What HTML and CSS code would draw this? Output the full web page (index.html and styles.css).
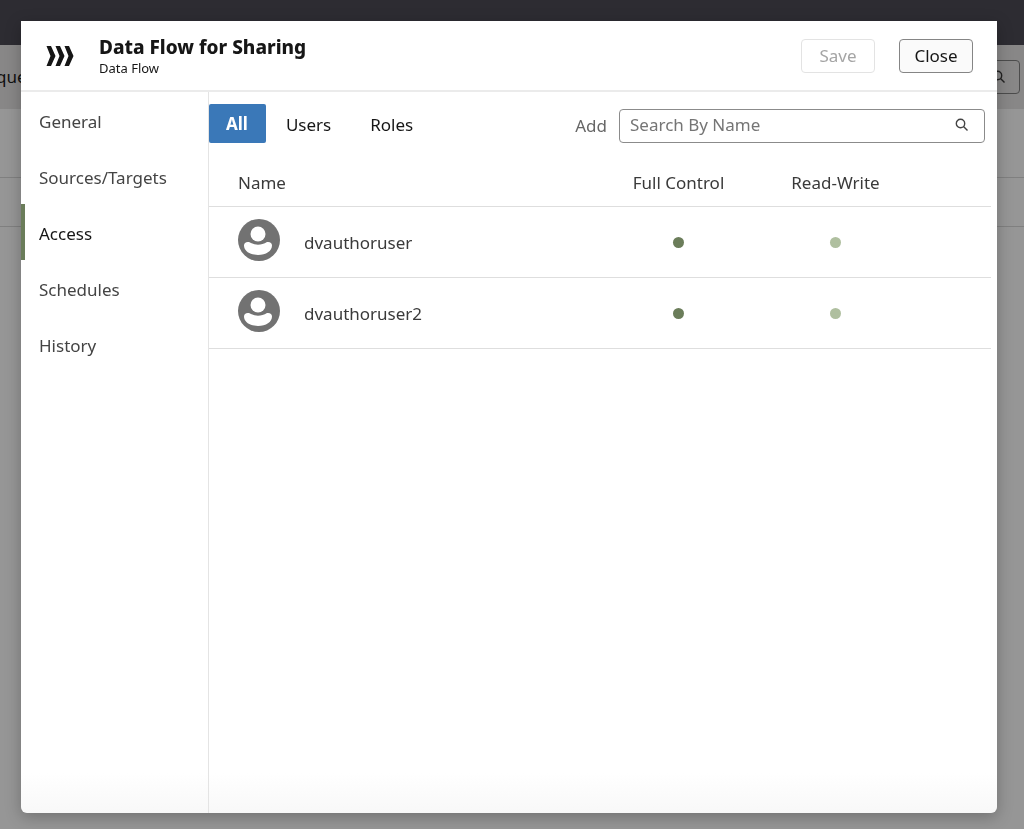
FILE: index.html
```
<!DOCTYPE html>
<html lang="en">

<head>
    <meta charset="UTF-8">
    <meta name="viewport" content="width=device-width, initial-scale=1.0">
    <title>Data Flow for Sharing</title>

    <link rel="stylesheet" href="styles.css">
</head>

<body>
    <!-- dimmed page behind the dialog -->
    <div class="page">
        <div class="page-top"></div>
        <div class="page-bar">
            <span class="page-label">que</span>
            <div class="page-search">
                <svg class="search-icon" viewBox="0 0 14 14">
                    <circle cx="5.5" cy="5.5" r="4.200" />
                    <path d="M8.500 8.500L12.500 12.500" />
                </svg>
            </div>
        </div>
        <div class="page-row page-row-tall"></div>
        <div class="page-row"></div>
    </div>

    <div class="dialog" role="dialog" aria-labelledby="title">
        <header class="dialog-header">
            <svg class="flow-icon" viewBox="0 0 28 20">
                <path d="M0.500 0H5L9.500 10L5 20H0.500L4.500 10Z" />
                <path d="M9.500 0H14L18.500 10L14 20H9.500L13.500 10Z" />
                <path d="M18.500 0H23L27.500 10L23 20H18.500L22.500 10Z" />
            </svg>
            <div class="heading">
                <h1 id="title">Data Flow for Sharing</h1>
                <p>Data Flow</p>
            </div>
            <div class="actions">
                <button class="btn" type="button" disabled>Save</button>
                <button class="btn" type="button">Close</button>
            </div>
        </header>

        <div class="dialog-body">
            <nav class="side">
                <a href="#general">General</a>
                <a href="#sources">Sources/Targets</a>
                <a href="#access" class="active">Access</a>
                <a href="#schedules">Schedules</a>
                <a href="#history">History</a>
            </nav>

            <main class="content">
                <div class="toolbar">
                    <div class="tabs">
                        <button class="tab selected" type="button">All</button>
                        <button class="tab" type="button">Users</button>
                        <button class="tab" type="button">Roles</button>
                    </div>
                    <form class="add" action="#">
                        <label for="search">Add</label>
                        <div class="search-box">
                            <input type="text" id="search" placeholder="Search By Name">
                            <svg class="search-icon" viewBox="0 0 14 14">
                                <circle cx="5.5" cy="5.5" r="4.200" />
                                <path d="M8.500 8.500L12.500 12.500" />
                            </svg>
                        </div>
                    </form>
                </div>

                <table class="access">
                    <thead>
                        <tr>
                            <th class="name">Name</th>
                            <th class="level">Full Control</th>
                            <th class="level">Read-Write</th>
                            <th class="spare"></th>
                        </tr>
                    </thead>
                    <tbody>
                        <tr>
                            <td class="name">
                                <div class="user">
                                    <svg class="avatar" viewBox="0 0 42 42">
                                        <circle class="disc" cx="21" cy="21" r="21" />
                                        <circle cx="20" cy="15" r="7.500" />
                                        <path d="M11 23C8 22.500 6 24 6 26.500C6 32 12 36 20 36S34 32 34 26.500C34 24 32 22.500 29 23C23 26.500 17 26.500 11 23Z" />
                                    </svg>
                                    <span>dvauthoruser</span>
                                </div>
                            </td>
                            <td class="level"><span class="dot"></span></td>
                            <td class="level"><span class="dot pale"></span></td>
                            <td></td>
                        </tr>
                        <tr>
                            <td class="name">
                                <div class="user">
                                    <svg class="avatar" viewBox="0 0 42 42">
                                        <circle class="disc" cx="21" cy="21" r="21" />
                                        <circle cx="20" cy="15" r="7.500" />
                                        <path d="M11 23C8 22.500 6 24 6 26.500C6 32 12 36 20 36S34 32 34 26.500C34 24 32 22.500 29 23C23 26.500 17 26.500 11 23Z" />
                                    </svg>
                                    <span>dvauthoruser2</span>
                                </div>
                            </td>
                            <td class="level"><span class="dot"></span></td>
                            <td class="level"><span class="dot pale"></span></td>
                            <td></td>
                        </tr>
                    </tbody>
                </table>
            </main>
        </div>
    </div>
</body>

</html>
```

FILE: styles.css
```
:root {
    --text: #3a3a3a;
    --line: #dedede;
    --blue: #3a78b8;
    --green: #6b7d5a;
}

* {
    box-sizing: border-box;
}

html,
body {
    margin: 0;
    height: 100%;
}

body {
    overflow: hidden;
    background: #969696;
    color: var(--text);
    font: 17px/24px "Noto Sans", "Open Sans", sans-serif;
}

h1,
p {
    margin: 0;
}

button,
input {
    font: inherit;
}

/* page behind */
.page-top {
    height: 45px;
    background: #2d2c32;
}

.page-bar {
    display: flex;
    align-items: center;
    justify-content: space-between;
    height: 64px;
    padding-right: 4px;
    background: #888787;
}

.page-label {
    margin-left: -4px;
    color: #111;
}

.page-search {
    display: flex;
    align-items: center;
    justify-content: flex-end;
    width: 120px;
    height: 34px;
    padding-right: 13px;
    border: 1px solid #4c4c4c;
    border-radius: 4px;
}

.page-row {
    height: 49px;
    border-bottom: 1px solid #808080;
}

.page-row-tall {
    height: 69px;
}

/* dialog */
.dialog {
    position: fixed;
    inset: 21px 27px 16px 21px;
    display: flex;
    flex-direction: column;
    overflow: hidden;
    border-radius: 0 0 6px 6px;
    background: linear-gradient(to top, #f8f8f8, #fff 40px);
    box-shadow: 0 4px 16px rgba(0, 0, 0, .25);
}

.dialog-header {
    display: flex;
    align-items: center;
    height: 71px;
    padding: 0 24px 0 25px;
    border-bottom: 2px solid #ebebeb;
}

.flow-icon {
    width: 28px;
    height: 20px;
    margin-right: 25px;
    fill: #161616;
}

.heading {
    flex: 1;
    color: #161616;
}

.heading h1 {
    font-size: 19px;
    line-height: 24px;
    font-weight: 800;
}

.heading p {
    font-size: 13px;
    line-height: 18px;
}

.actions {
    display: flex;
    gap: 24px;
}

.btn {
    width: 74px;
    height: 34px;
    padding: 0;
    border: 1px solid #858585;
    border-radius: 4px;
    background: #fafafa;
    color: #161616;
}

.btn:disabled {
    border-color: #e3e3e3;
    background: #fff;
    color: #a5a5a5;
}

.dialog-body {
    display: flex;
    flex: 1;
}

.side {
    width: 188px;
    border-right: 1px solid #e4e4e4;
}

.side a {
    display: flex;
    align-items: center;
    height: 56px;
    padding: 3px 0 0 14px;
    border-left: 4px solid transparent;
    color: #444;
    text-decoration: none;
}

.side .active {
    border-color: var(--green);
    color: #161616;
}

.content {
    flex: 1;
    padding: 12px 6px 0 0;
}

.toolbar {
    display: flex;
    justify-content: space-between;
    padding-right: 6px;
}

.tabs {
    display: flex;
}

.tab {
    height: 39px;
    padding: 2px 19px 0 20px;
    border: 0;
    border-radius: 2px;
    background: none;
    color: #161616;
}

.tab.selected {
    padding: 0 18px 0 17px;
    background: var(--blue);
    color: #fff;
    font-weight: 700;
}

.add {
    display: flex;
    align-items: center;
    gap: 12px;
    padding-top: 4px;
}

.add label {
    color: #666;
}

.search-box {
    display: flex;
    align-items: center;
    width: 366px;
    height: 34px;
    padding: 0 15px 2px 10px;
    border: 1px solid #8b8b8b;
    border-radius: 4px;
    background: #fff;
}

.search-box input {
    flex: 1;
    min-width: 0;
    padding: 0;
    border: 0;
    outline: 0;
    background: none;
    color: var(--text);
}

.search-box input::placeholder {
    color: #757575;
}

.search-icon {
    width: 14px;
    height: 14px;
    fill: none;
    stroke: #444;
    stroke-width: 1.4;
}

.page-search .search-icon {
    stroke: #222;
}

/* access table */
.access {
    width: 100%;
    border-collapse: collapse;
    table-layout: fixed;
}

.access th,
.access td {
    height: 71px;
    padding: 0;
    border-bottom: 1px solid var(--line);
    font-weight: 400;
    text-align: center;
}

.access th {
    height: 63px;
    padding-top: 18px;
}

.access .name {
    padding-left: 29px;
    text-align: left;
}

.level {
    width: 157px;
}

.spare {
    width: 77px;
}

.user {
    display: flex;
    align-items: center;
    gap: 24px;
}

.user span {
    padding-top: 2px;
}

.avatar {
    width: 42px;
    height: 42px;
    margin-bottom: 4px;
    fill: #fff;
}

.avatar .disc {
    fill: #727272;
}

.dot {
    display: inline-block;
    width: 11px;
    height: 11px;
    border-radius: 50%;
    background: var(--green);
}

.dot.pale {
    background: #afbf9f;
}
```
